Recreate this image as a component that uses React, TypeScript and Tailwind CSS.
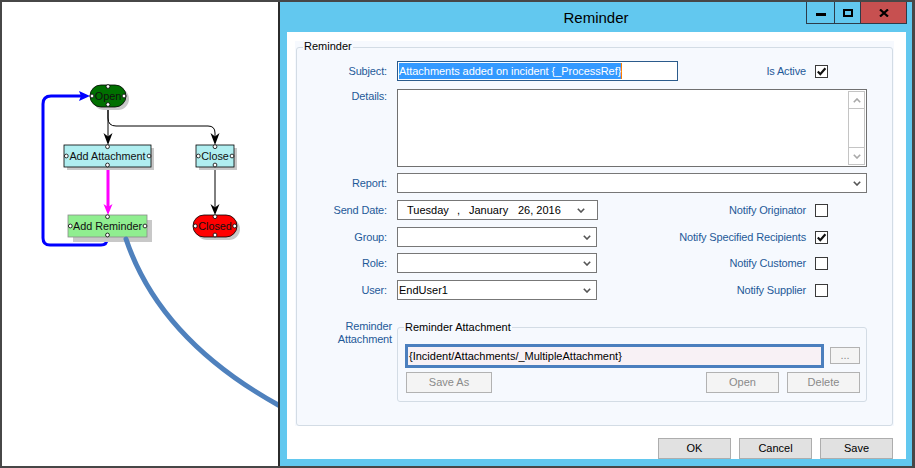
import React from 'react';

const LABEL = 'text-[#1f5a99] whitespace-nowrap tracking-[-0.15px]';

function Chevron({ up = false, color = '#555' }: { up?: boolean; color?: string }) {
  return (
    <svg width="8" height="5" viewBox="0 0 8 5" className="shrink-0">
      <path d={up ? 'M0.8 4.3 L4 1 L7.2 4.3' : 'M0.8 0.7 L4 4 L7.2 0.7'} fill="none" stroke={color} strokeWidth="1.6" />
    </svg>
  );
}

function Check({ checked = false }: { checked?: boolean }) {
  return (
    <div className="ml-[9px] w-[13px] h-[13px] border border-[#3a3a3a] bg-white flex items-center justify-center shrink-0">
      {checked && (
        <svg width="11" height="11" viewBox="0 0 11 11">
          <path d="M1.8 5.6 L4.3 8.2 L9.4 2.2" fill="none" stroke="#111" strokeWidth="2.2" />
        </svg>
      )}
    </div>
  );
}

function Select({ width, value, chevronRight = 5 }: { width: string; value?: string; chevronRight?: number }) {
  return (
    <div className={`ml-[10px] ${width} h-[20px] border border-[#777] bg-white flex items-center pl-[1px]`}>
      <span className="flex-1 text-black">{value}</span>
      <div style={{ marginRight: chevronRight }}>
        <Chevron />
      </div>
    </div>
  );
}

function Diagram() {
  const port = (x: number, y: number) => <circle cx={x} cy={y} r="1.9" fill="#fff" stroke="#000" strokeWidth="0.8" />;
  const txt = { fontFamily: '"Liberation Sans", Arial, sans-serif', fontSize: 10.8 };
  return (
    <svg width="276" height="464" viewBox="2 2 276 464" overflow="visible">
      {/* edges */}
      <path d="M108 107 L108 140" stroke="#000" strokeWidth="1" fill="none" />
      <polygon points="103.5,133 108,145 112.5,133 108,136.5" fill="#000" />
      <path d="M108 107 L108 118 Q108 126 116 126 L208 126 Q215 126 215 133 L215 140" stroke="#000" strokeWidth="1" fill="none" />
      <polygon points="210.5,133 215,145 219.5,133 215,136.5" fill="#000" />
      <path d="M108 167 L108 208" stroke="#ff00ff" strokeWidth="3" fill="none" />
      <polygon points="103.5,204 108,215 112.5,204 108,207" fill="#ff00ff" />
      <path d="M215 167 L215 208" stroke="#000" strokeWidth="1" fill="none" />
      <polygon points="210.5,204 215,215 219.5,204 215,207.5" fill="#000" />
      <path d="M107 236 L107 239 Q107 245 101 245 L50 245 Q43 245 43 238 L43 104 Q43 96 51 96 L82 96" stroke="#0000ff" strokeWidth="3" fill="none" />
      <polygon points="79,91 90,96 79,101 81,96" fill="#0000ff" />

      {/* Open */}
      <rect x="93" y="88" width="36" height="22" rx="11" fill="#c8c8c8" />
      <rect x="90" y="85" width="36" height="22" rx="11" fill="#007000" stroke="#000" strokeWidth="0.8" />
      <text x="108" y="100" textAnchor="middle" fill="#111" style={txt}>Open</text>
      {port(108, 86.5)}
      {port(108, 104.5)}
      {port(92, 96)}
      {port(124, 96)}

      {/* Add Attachment */}
      <rect x="67" y="148" width="87" height="22" fill="#c8c8c8" />
      <rect x="64" y="145" width="87" height="22" fill="#b0eef0" stroke="#000" strokeWidth="0.8" />
      <text x="107.5" y="160" textAnchor="middle" fill="#111" style={txt}>Add Attachment</text>
      {port(107.5, 146.7)}
      {port(107.5, 165)}
      {port(66.3, 156)}
      {port(149, 156)}

      {/* Close */}
      <rect x="199" y="148" width="38" height="22" fill="#c8c8c8" />
      <rect x="196" y="145" width="38" height="22" fill="#b0eef0" stroke="#000" strokeWidth="0.8" />
      <text x="215" y="160" textAnchor="middle" fill="#111" style={txt}>Close</text>
      {port(215, 146.7)}
      {port(215, 165)}
      {port(198.3, 156)}
      {port(232, 156)}

      {/* Add Reminder */}
      <rect x="73" y="220" width="79" height="22" fill="#c8c8c8" />
      <rect x="68" y="215" width="79" height="22" fill="#90ee90" stroke="#8a8a8a" strokeWidth="0.8" />
      <text x="107.5" y="230" textAnchor="middle" fill="#111" style={txt}>Add Reminder</text>
      {port(107.5, 216.7)}
      {port(107.5, 235)}
      {port(70.3, 226)}
      {port(145, 226)}

      {/* Closed */}
      <rect x="196" y="218" width="44" height="22" rx="11" fill="#c8c8c8" />
      <rect x="193" y="215" width="44" height="22" rx="11" fill="#ff0000" stroke="#000" strokeWidth="0.8" />
      <text x="215" y="230" textAnchor="middle" fill="#111" style={txt}>Closed</text>
      {port(215, 216.7)}
      {port(215, 235)}
      {port(195.3, 226)}
      {port(234.7, 226)}

      {/* link to dialog */}
      <path d="M126 239 Q160 340 280 406" stroke="#4f81bd" strokeWidth="5" strokeLinecap="round" fill="none" />
    </svg>
  );
}

function Btn({ label, className = '', disabled = false }: { label: string; className?: string; disabled?: boolean }) {
  return (
    <div
      className={`h-[21px] border flex items-center justify-center ${
        disabled ? 'bg-[#f4f4f4] border-[#b2b2b2] text-[#8a8a8a]' : 'bg-[#e1e1e1] border-[#adadad] text-black'
      } ${className}`}
    >
      {label}
    </div>
  );
}

export default function App() {
  return (
    <div className="w-[915px] h-[468px] flex bg-white border-t-2 border-l-2 border-b-2 border-r-[3px] border-[#474747] overflow-hidden font-['Liberation_Sans',Arial,sans-serif] text-[11px] leading-[13px]">
      <div className="w-[276px] shrink-0 h-full bg-white">
        <Diagram />
      </div>

      <div className="flex-1 flex flex-col border-l-2 border-[#2b2b2b] bg-[#62c8ef] pl-[7px] pr-[6px] pb-[7px] relative">
        {/* title bar */}
        <div className="h-[30px] shrink-0 flex items-center justify-center pt-[1px] -ml-[7px] -mr-[6px]">
          <span className="text-[15px] text-black leading-[18px]">Reminder</span>
        </div>
        <div className="absolute top-0 right-[5px] h-[22px] flex border-x border-b border-[#2c3b49]">
          <div className="w-[28px] h-full flex items-center justify-center border-r border-[#2c3b49]">
            <div className="w-[10px] h-[3px] bg-black mt-[3px]" />
          </div>
          <div className="w-[26px] h-full flex items-center justify-center border-r border-[#2c3b49]">
            <div className="w-[10px] h-[8px] border-2 border-black" />
          </div>
          <div className="w-[45px] h-full flex items-center justify-center bg-[#c75050]">
            <svg width="10" height="8" viewBox="0 0 10 8">
              <path d="M1 0.5 L9 7.5 M9 0.5 L1 7.5" stroke="#000" strokeWidth="2.2" />
            </svg>
          </div>
        </div>

        {/* client area */}
        <div className="flex-1 bg-white flex flex-col pl-[8px] pt-[9px] pr-[12px]">
          <div className="h-[385px] bg-[#f6f9fe] pt-[6px] px-[1px]">
            <div className="relative h-[379px] border border-[#d3dce5] rounded-[3px] flex flex-col pt-[13px]">
              <span className="absolute top-[-8px] left-[6px] px-[1px] bg-[#f6f9fe] text-black">Reminder</span>

              {/* Subject */}
              <div className="h-[20px] flex items-center">
                <div className={`w-[90px] text-right ${LABEL}`}>Subject:</div>
                <div className="ml-[10px] w-[281px] h-[20px] border border-[#2b5b8c] bg-white flex items-center pl-[1px] overflow-hidden">
                  <span className="bg-[#3399ff] text-white h-[16px] leading-[16px] border-r border-[#ff7f00] whitespace-nowrap tracking-[-0.05px]">
                    Attachments added on incident {'{'}_ProcessRef{'}'}
                  </span>
                </div>
                <div className="flex-1" />
                <span className={LABEL}>Is Active</span>
                <Check checked />
                <div className="w-[64px]" />
              </div>

              {/* Details */}
              <div className="mt-[8px] h-[78px] flex items-start">
                <div className={`w-[90px] text-right pt-[1px] ${LABEL}`}>Details:</div>
                <div className="ml-[10px] w-[470px] h-[78px] border border-[#707070] bg-white flex justify-end p-[1px]">
                  <div className="w-[17px] h-full border border-[#c4c4c4] flex flex-col justify-between">
                    <div className="h-[17px] border-b border-[#c4c4c4] flex items-center justify-center">
                      <Chevron up color="#a8a8a8" />
                    </div>
                    <div className="h-[17px] border-t border-[#c4c4c4] flex items-center justify-center">
                      <Chevron color="#a8a8a8" />
                    </div>
                  </div>
                </div>
              </div>

              {/* Report */}
              <div className="mt-[6px] h-[20px] flex items-center">
                <div className={`w-[90px] text-right ${LABEL}`}>Report:</div>
                <Select width="w-[470px]" />
              </div>

              {/* Send Date */}
              <div className="mt-[7px] h-[20px] flex items-center">
                <div className={`w-[90px] text-right ${LABEL}`}>Send Date:</div>
                <div className="ml-[10px] w-[201px] h-[20px] border border-[#777] bg-white flex items-center pl-[9px] text-black">
                  <span className="w-[50px]">Tuesday</span>
                  <span className="w-[12px]">,</span>
                  <span className="w-[49px]">January</span>
                  <span className="flex-1">26, 2016</span>
                  <div className="mr-[12px]">
                    <Chevron />
                  </div>
                </div>
                <div className="flex-1" />
                <span className={LABEL}>Notify Originator</span>
                <Check />
                <div className="w-[64px]" />
              </div>

              {/* Group */}
              <div className="mt-[7px] h-[20px] flex items-center">
                <div className={`w-[90px] text-right ${LABEL}`}>Group:</div>
                <Select width="w-[200px]" />
                <div className="flex-1" />
                <span className={LABEL}>Notify Specified Recipients</span>
                <Check checked />
                <div className="w-[64px]" />
              </div>

              {/* Role */}
              <div className="mt-[6px] h-[20px] flex items-center">
                <div className={`w-[90px] text-right ${LABEL}`}>Role:</div>
                <Select width="w-[200px]" />
                <div className="flex-1" />
                <span className={LABEL}>Notify Customer</span>
                <Check />
                <div className="w-[64px]" />
              </div>

              {/* User */}
              <div className="mt-[7px] h-[20px] flex items-center">
                <div className={`w-[90px] text-right ${LABEL}`}>User:</div>
                <Select width="w-[200px]" value="EndUser1" />
                <div className="flex-1" />
                <span className={LABEL}>Notify Supplier</span>
                <Check />
                <div className="w-[64px]" />
              </div>

              {/* Attachment */}
              <div className="flex items-start">
                <div className={`w-[95px] mt-[20px] text-right ${LABEL}`}>
                  Reminder
                  <br />
                  Attachment
                </div>
                <div className="ml-[5px] mt-[27px] w-[470px] h-[75px] border border-[#d3dce5] rounded-[3px] relative flex flex-col pt-[16px] pl-[7px] pr-[6px]">
                  <span className="absolute top-[-7px] left-[6px] px-[1px] bg-[#f6f9fe] text-black">Reminder Attachment</span>
                  <div className="flex items-center">
                    <div className="w-[419px] h-[24px] border-[3px] border-[#4b7fbe] bg-[#f8f1f5] flex items-center pl-[1px] text-black whitespace-nowrap">
                      {'{'}Incident/Attachments/_MultipleAttachment{'}'}
                    </div>
                    <Btn label="..." disabled className="ml-[6px] w-[30px] !h-[17px] -mt-[1px]" />
                  </div>
                  <div className="flex items-center mt-[3px]">
                    <Btn label="Save As" disabled className="ml-[1px] w-[86px]" />
                    <div className="flex-1" />
                    <Btn label="Open" disabled className="w-[73px] mt-[1px]" />
                    <Btn label="Delete" disabled className="ml-[8px] w-[73px] mt-[1px]" />
                  </div>
                </div>
              </div>
            </div>
          </div>

          {/* dialog buttons */}
          <div className="mt-[12px] flex justify-end gap-[8px] pr-[1px]">
            <Btn label="OK" className="w-[73px]" />
            <Btn label="Cancel" className="w-[73px]" />
            <Btn label="Save" className="w-[73px]" />
          </div>
        </div>
      </div>
    </div>
  );
}
